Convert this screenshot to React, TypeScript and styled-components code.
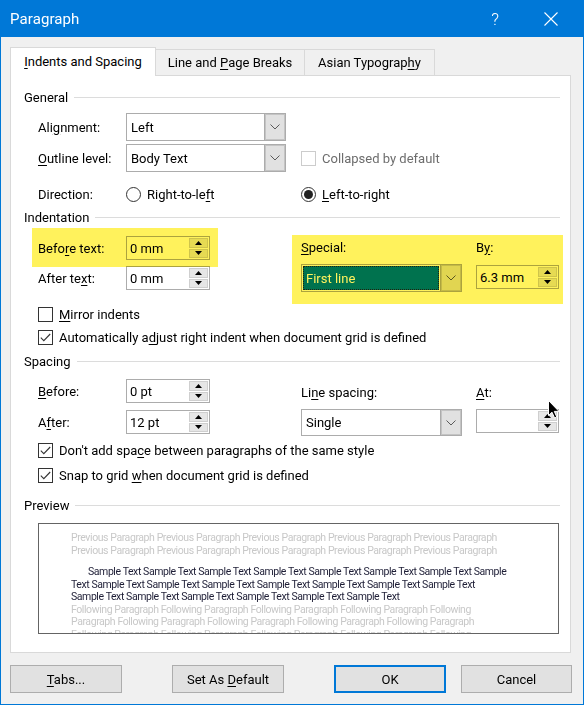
import React from 'react'
import styled, { createGlobalStyle } from 'styled-components'

const GlobalStyle = createGlobalStyle`
  html, body { margin: 0; padding: 0; background: #f0f0f0; }
  body {
    font-family: Roboto, 'Noto Sans', sans-serif;
    font-size: 13px;
    color: #000;
  }
  * { box-sizing: border-box; }
  u { text-underline-offset: 2px; }
`

const Window = styled.div`
  position: relative;
  width: 584px;
  height: 705px;
  display: flex;
  flex-direction: column;
  background: #f0f0f0;
  border: 1px solid #0078d7;
  border-top: none;
  overflow: hidden;
`

const TitleBar = styled.div`
  height: 37px;
  flex: none;
  display: flex;
  align-items: center;
  background: #0078d7;
  color: #fff;
  padding-left: 9px;
`

const Title = styled.div`
  flex: 1;
  font-size: 15px;
  letter-spacing: 0.1px;
`

const CaptionButton = styled.div<{ $ml?: number }>`
  width: 30px;
  height: 30px;
  display: flex;
  align-items: center;
  justify-content: center;
  margin-left: ${({ $ml }) => $ml ?? 0}px;
  font-size: 17px;
  font-weight: 300;
`

const Body = styled.div`
  flex: 1;
  display: flex;
  flex-direction: column;
  padding: 10px 11px 11px 9px;
`

const TabStrip = styled.div`
  display: flex;
  align-items: flex-end;
  height: 28px;
`

const Tab = styled.div<{ $active?: boolean; $w: number }>`
  width: ${({ $w }) => $w}px;
  height: ${({ $active }) => ($active ? 29 : 26)}px;
  margin-bottom: ${({ $active }) => ($active ? -1 : 0)}px;
  position: relative;
  z-index: ${({ $active }) => ($active ? 1 : 0)};
  display: flex;
  align-items: center;
  justify-content: center;
  padding-bottom: ${({ $active }) => ($active ? 1 : 0)}px;
  background: ${({ $active }) => ($active ? '#fff' : '#f0f0f0')};
  border: 1px solid #d9d9d9;
  border-bottom: none;
  border-left: ${({ $active }) => ($active ? '1px solid #d9d9d9' : 'none')};
`

const Panel = styled.div`
  width: 561px;
  height: 578px;
  display: flex;
  flex-direction: column;
  background: #fff;
  border: 1px solid #d9d9d9;
  padding: 0 10px 0 13px;
`

const SectionHead = styled.div<{ $top: number }>`
  display: flex;
  align-items: center;
  gap: 6px;
  height: 16px;
  margin-top: ${({ $top }) => $top}px;
  &::after {
    content: '';
    flex: 1;
    height: 1px;
    background: #dcdcdc;
  }
`

const Indent = styled.div`
  display: flex;
  flex-direction: column;
  padding-left: 14px;
`

const Row = styled.div<{ $h: number; $top?: number }>`
  display: flex;
  align-items: center;
  height: ${({ $h }) => $h}px;
  margin-top: ${({ $top }) => $top ?? 0}px;
`

const Label = styled.div`
  width: 88px;
  flex: none;
`

const Columns = styled.div`
  display: flex;
  align-items: flex-start;
`

const Column = styled.div<{ $w?: number; $pt: number }>`
  display: flex;
  flex-direction: column;
  width: ${({ $w }) => ($w ? `${$w}px` : 'auto')};
  padding-top: ${({ $pt }) => $pt}px;
`

const Highlight = styled.div<{ $inset: string }>`
  position: relative;
  width: fit-content;
  &::after {
    content: '';
    position: absolute;
    inset: ${({ $inset }) => $inset};
    background: #fff25c;
    mix-blend-mode: multiply;
    pointer-events: none;
  }
`

const FieldGrid = styled.div<{ $h: number }>`
  display: grid;
  grid-template-columns: 175px 83px;
  grid-template-rows: 16px ${({ $h }) => $h}px;
  row-gap: 8px;
  align-items: start;
`

const GridLabel = styled.div`
  line-height: 16px;
`

const SelectBox = styled.div<{ $w: number; $h: number }>`
  width: ${({ $w }) => $w}px;
  height: ${({ $h }) => $h}px;
  display: flex;
  background: #fff;
  border: 1px solid #acacac;
`

const SelectValue = styled.div<{ $selected?: boolean }>`
  flex: 1;
  display: flex;
  align-items: center;
  margin: 1px;
  padding-left: 3px;
  background: ${({ $selected }) => ($selected ? '#0078d7' : 'transparent')};
  color: ${({ $selected }) => ($selected ? '#fff' : '#000')};
  outline: ${({ $selected }) => ($selected ? '1px dotted #222' : 'none')};
  outline-offset: -1px;
`

const DropButton = styled.div`
  width: 21px;
  flex: none;
  display: flex;
  align-items: center;
  justify-content: center;
  background: #e1e1e1;
  border-left: 1px solid #acacac;
  box-shadow: inset 0 0 0 1px #c4c4c4;
`

const SpinBoxFrame = styled.div<{ $w: number }>`
  width: ${({ $w }) => $w}px;
  height: 24px;
  display: flex;
  background: #fff;
  border: 1px solid #acacac;
`

const SpinValue = styled.div`
  flex: 1;
  display: flex;
  align-items: center;
  padding-left: 3px;
`

const SpinButtons = styled.div`
  width: 19px;
  display: flex;
  flex-direction: column;
  gap: 1px;
  margin: 1px 1px 1px 0;
`

const SpinHalf = styled.div`
  flex: 1;
  display: flex;
  align-items: center;
  justify-content: center;
  background: #e6e6e6;
  border: 1px solid #cfcfcf;
`

const Toggle = styled.div<{ $w?: number; $ml?: number; $disabled?: boolean }>`
  display: flex;
  align-items: center;
  gap: 6px;
  width: ${({ $w }) => ($w ? `${$w}px` : 'auto')};
  margin-left: ${({ $ml }) => $ml ?? 0}px;
  color: ${({ $disabled }) => ($disabled ? '#6d6d6d' : '#000')};
`

const CheckSquare = styled.div<{ $disabled?: boolean }>`
  width: 15px;
  height: 15px;
  flex: none;
  display: flex;
  align-items: center;
  justify-content: center;
  background: #fff;
  border: 1px solid ${({ $disabled }) => ($disabled ? '#cccccc' : '#333')};
`

const RadioCircle = styled.div<{ $checked?: boolean }>`
  width: 15px;
  height: 15px;
  flex: none;
  border-radius: 50%;
  border: 1px solid #333;
  background: #fff;
  display: flex;
  align-items: center;
  justify-content: center;
  &::after {
    content: '';
    width: 9px;
    height: 9px;
    border-radius: 50%;
    background: ${({ $checked }) => ($checked ? '#222' : 'transparent')};
  }
`

const Preview = styled.div`
  margin: 10px 0 0 14px;
  width: 521px;
  height: 111px;
  border: 1px solid #646464;
  overflow: hidden;
  padding: 8px 0 0 32px;
  font-size: 10.5px;
  letter-spacing: -0.42px;
  line-height: 12.5px;
  white-space: nowrap;
`

const PreviewLine = styled.div<{ $tone: 'ghost' | 'text'; $indent?: boolean; $gap?: boolean }>`
  color: ${({ $tone }) => ($tone === 'ghost' ? '#c8c8c8' : '#1e1e36')};
  padding-left: ${({ $indent }) => ($indent ? 17 : 0)}px;
  margin-top: ${({ $gap }) => ($gap ? 9 : 0)}px;
`

const ButtonRow = styled.div`
  display: flex;
  margin-top: 12px;
`

const Button = styled.div<{ $ml?: number; $default?: boolean; $w?: number }>`
  width: ${({ $w }) => $w ?? 112}px;
  height: 28px;
  margin-left: ${({ $ml }) => $ml ?? 0}px;
  display: flex;
  align-items: center;
  justify-content: center;
  background: #e1e1e1;
  border: ${({ $default }) => ($default ? '2px solid #0078d7' : '1px solid #adadad')};
`

const Cursor = styled.svg`
  position: absolute;
  left: 547px;
  top: 400px;
`

const Chevron = () => (
  <svg width="10" height="6" viewBox="0 0 10 6">
    <polyline points="0.5,0.5 5,5 9.5,0.5" fill="none" stroke="#5a5a5a" strokeWidth="1" />
  </svg>
)

const Triangle = ({ up }: { up?: boolean }) => (
  <svg width="7" height="4" viewBox="0 0 7 4">
    <polygon points={up ? '3.5,0 7,4 0,4' : '0,0 7,0 3.5,4'} fill="#000" />
  </svg>
)

const Tick = () => (
  <svg width="11" height="9" viewBox="0 0 11 9">
    <polyline points="0.8,4.6 3.8,7.6 10.2,1" fill="none" stroke="#333" strokeWidth="1.1" />
  </svg>
)

const Select = ({ value, w = 160, h = 28, selected }: { value: string; w?: number; h?: number; selected?: boolean }) => (
  <SelectBox $w={w} $h={h}>
    <SelectValue $selected={selected}>{value}</SelectValue>
    <DropButton>
      <Chevron />
    </DropButton>
  </SelectBox>
)

const SpinBox = ({ value, w = 84 }: { value: string; w?: number }) => (
  <SpinBoxFrame $w={w}>
    <SpinValue>{value}</SpinValue>
    <SpinButtons>
      <SpinHalf>
        <Triangle up />
      </SpinHalf>
      <SpinHalf>
        <Triangle />
      </SpinHalf>
    </SpinButtons>
  </SpinBoxFrame>
)

const Check = ({ children, checked, disabled, ml }: { children: React.ReactNode; checked?: boolean; disabled?: boolean; ml?: number }) => (
  <Toggle $ml={ml} $disabled={disabled}>
    <CheckSquare $disabled={disabled}>{checked && <Tick />}</CheckSquare>
    <span>{children}</span>
  </Toggle>
)

const Radio = ({ children, checked, w }: { children: React.ReactNode; checked?: boolean; w?: number }) => (
  <Toggle $w={w}>
    <RadioCircle $checked={checked} />
    <span>{children}</span>
  </Toggle>
)

const prev = 'Previous Paragraph Previous Paragraph Previous Paragraph Previous Paragraph Previous Paragraph'
const preview: { text: string; tone: 'ghost' | 'text'; indent?: boolean; gap?: boolean }[] = [
  { text: prev, tone: 'ghost' },
  { text: prev, tone: 'ghost' },
  {
    text: 'Sample Text Sample Text Sample Text Sample Text Sample Text Sample Text Sample Text Sample',
    tone: 'text',
    indent: true,
    gap: true,
  },
  { text: 'Text Sample Text Sample Text Sample Text Sample Text Sample Text Sample Text Sample Text', tone: 'text' },
  { text: 'Sample Text Sample Text Sample Text Sample Text Sample Text Sample Text', tone: 'text' },
  { text: 'Following Paragraph Following Paragraph Following Paragraph Following Paragraph Following', tone: 'ghost' },
  { text: 'Paragraph Following Paragraph Following Paragraph Following Paragraph Following Paragraph', tone: 'ghost' },
  { text: 'Following Paragraph Following Paragraph Following Paragraph Following Paragraph Following', tone: 'ghost' },
]

export default function App() {
  return (
    <>
      <GlobalStyle />
      <Window>
        <TitleBar>
          <Title>Paragraph</Title>
          <CaptionButton>?</CaptionButton>
          <CaptionButton $ml={26}>
            <svg width="14" height="14" viewBox="0 0 14 14">
              <path d="M0.5 0.5 L13.5 13.5 M13.5 0.5 L0.5 13.5" stroke="#fff" strokeWidth="1.1" />
            </svg>
          </CaptionButton>
          <div style={{ width: 17 }} />
        </TitleBar>

        <Body>
          <TabStrip>
            <Tab $active $w={146}>
              <span>
                <u>I</u>ndents and Spacing
              </span>
            </Tab>
            <Tab $w={149}>
              <span>
                Line and <u>P</u>age Breaks
              </span>
            </Tab>
            <Tab $w={130}>
              <span>
                Asian Typograp<u>h</u>y
              </span>
            </Tab>
          </TabStrip>

          <Panel>
            <SectionHead $top={13}>General</SectionHead>
            <Indent>
              <Row $h={28} $top={8}>
                <Label>
                  Ali<u>g</u>nment:
                </Label>
                <Select value="Left" />
              </Row>
              <Row $h={28} $top={3}>
                <Label>
                  <u>O</u>utline level:
                </Label>
                <Select value="Body Text" />
                <Check ml={15} disabled>
                  Collapsed by default
                </Check>
              </Row>
              <Row $h={20} $top={12}>
                <Label>Direction:</Label>
                <Radio w={175}>
                  Right-to-le<u>f</u>t
                </Radio>
                <Radio checked>
                  <u>L</u>eft-to-right
                </Radio>
              </Row>
            </Indent>

            <SectionHead $top={5}>Indentation</SectionHead>
            <Indent>
              <Columns>
                <Column $w={263} $pt={11}>
                  <Highlight $inset="-8px -8px -7px -6px">
                    <Row $h={24}>
                      <Label>
                        Befo<u>r</u>e text:
                      </Label>
                      <SpinBox value="0 mm" />
                    </Row>
                  </Highlight>
                  <Row $h={24} $top={6}>
                    <Label>
                      After te<u>x</u>t:
                    </Label>
                    <SpinBox value="0 mm" />
                  </Row>
                </Column>
                <Column $pt={15}>
                  <Highlight $inset="-5px -4px -12px -9px">
                    <FieldGrid $h={28}>
                      <GridLabel>
                        <u>S</u>pecial:
                      </GridLabel>
                      <GridLabel>
                        B<u>y</u>:
                      </GridLabel>
                      <Select value="First line" w={161} selected />
                      <div style={{ marginTop: 1 }}>
                        <SpinBox value="6.3 mm" w={83} />
                      </div>
                    </FieldGrid>
                  </Highlight>
                </Column>
              </Columns>
              <Row $h={20} $top={12}>
                <Check>
                  <u>M</u>irror indents
                </Check>
              </Row>
              <Row $h={20} $top={3}>
                <Check checked>
                  Automatically a<u>d</u>just right indent when document grid is defined
                </Check>
              </Row>
            </Indent>

            <SectionHead $top={6}>Spacing</SectionHead>
            <Indent>
              <Columns>
                <Column $w={263} $pt={10}>
                  <Row $h={24}>
                    <Label>
                      <u>B</u>efore:
                    </Label>
                    <SpinBox value="0 pt" />
                  </Row>
                  <Row $h={24} $top={7}>
                    <Label>
                      A<u>f</u>ter:
                    </Label>
                    <SpinBox value="12 pt" />
                  </Row>
                </Column>
                <Column $pt={16}>
                  <FieldGrid $h={27}>
                    <GridLabel>
                      Li<u>n</u>e spacing:
                    </GridLabel>
                    <GridLabel>
                      <u>A</u>t:
                    </GridLabel>
                    <Select value="Single" w={161} h={27} />
                    <SpinBox value="" w={83} />
                  </FieldGrid>
                </Column>
              </Columns>
              <Row $h={20} $top={4}>
                <Check checked>
                  Don't add spa<u>c</u>e between paragraphs of the same style
                </Check>
              </Row>
              <Row $h={20} $top={5}>
                <Check checked>
                  Snap to grid <u>w</u>hen document grid is defined
                </Check>
              </Row>
            </Indent>

            <SectionHead $top={12}>Preview</SectionHead>
            <Preview>
              {preview.map((l, i) => (
                <PreviewLine key={i} $tone={l.tone} $indent={l.indent} $gap={l.gap}>
                  {l.text}
                </PreviewLine>
              ))}
            </Preview>
          </Panel>

          <ButtonRow>
            <Button>
              <span>
                <u>T</u>abs...
              </span>
            </Button>
            <Button $ml={50}>
              <span>
                Set As <u>D</u>efault
              </span>
            </Button>
            <Button $ml={50} $default>
              OK
            </Button>
            <Button $ml={15} $w={111}>
              Cancel
            </Button>
          </ButtonRow>
        </Body>

        <Cursor width="12" height="19" viewBox="0 0 12 19">
          <path d="M0.5 0.5 L0.5 15.5 L4 12.2 L6.6 18 L8.8 17 L6.3 11.4 L11 11.4 Z" fill="#000" stroke="#fff" strokeWidth="1" />
        </Cursor>
      </Window>
    </>
  )
}
